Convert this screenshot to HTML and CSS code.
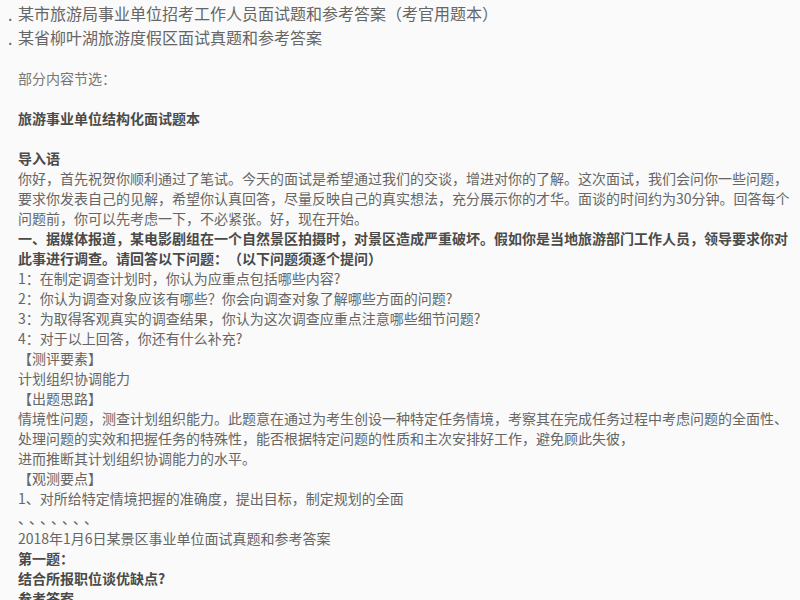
FILE: index.html
```html
<!DOCTYPE html>
<html lang="zh-CN">
<head>
    <meta charset="UTF-8">
    <meta name="viewport" content="width=device-width, initial-scale=1.0">
    <title>旅游事业单位结构化面试题本</title>
    <link rel="stylesheet" href="styles.css">
</head>
<body>
    <ul class="lista-enlaces">
        <li>某市旅游局事业单位招考工作人员面试题和参考答案（考官用题本）</li>
        <li>某省柳叶湖旅游度假区面试真题和参考答案</li>
    </ul>

    <div class="articulo">
        <p class="nota">部分内容节选：</p>

        <p class="titulo">旅游事业单位结构化面试题本</p>

        <p>
            <b>导入语</b><br>
            你好，首先祝贺你顺利通过了笔试。今天的面试是希望通过我们的交谈，增进对你的了解。这次面试，我们会问你一些问题，要求你发表自己的见解，希望你认真回答，尽量反映自己的真实想法，充分展示你的才华。面谈的时间约为30分钟。回答每个问题前，你可以先考虑一下，不必紧张。好，现在开始。<br>
            <b>一、据媒体报道，某电影剧组在一个自然景区拍摄时，对景区造成严重破坏。假如你是当地旅游部门工作人员，领导要求你对此事进行调查。请回答以下问题：（以下问题须逐个提问）</b><br>
            1：在制定调查计划时，你认为应重点包括哪些内容?<br>
            2：你认为调查对象应该有哪些？你会向调查对象了解哪些方面的问题?<br>
            3：为取得客观真实的调查结果，你认为这次调查应重点注意哪些细节问题?<br>
            4：对于以上回答，你还有什么补充?<br>
            【测评要素】<br>
            计划组织协调能力<br>
            【出题思路】<br>
            情境性问题，测查计划组织能力。此题意在通过为考生创设一种特定任务情境，考察其在完成任务过程中考虑问题的全面性、处理问题的实效和把握任务的特殊性，能否根据特定问题的性质和主次安排好工作，避免顾此失彼，<br>
            进而推断其计划组织协调能力的水平。<br>
            【观测要点】<br>
            1、对所给特定情境把握的准确度，提出目标，制定规划的全面<br>
            <span class="puntos">、、、、、、、</span><br>
            2018年1月6日某景区事业单位面试真题和参考答案<br>
            <b>第一题：</b><br>
            <b>结合所报职位谈优缺点?</b><br>
            <b>参考答案</b>
        </p>
    </div>
</body>
</html>
```

FILE: styles.css
```css
body {
    font-family: "Noto Sans CJK SC", "Liberation Sans", sans-serif;
    background-color: #f9faf9;
    color: #666;
    margin: 0;
    padding: 0;
    text-spacing-trim: space-all;
}

.lista-enlaces {
    list-style: none;
    margin: 1px 0 0 8px;
    padding: 0;
}

.lista-enlaces li {
    display: flex;
    font-size: 16px;
    line-height: 24px;
    color: #666;
}

.lista-enlaces li::before {
    content: ".";
    width: 10px;
    flex: none;
    position: relative;
    top: 1px;
}

.articulo {
    width: 776px;
    margin: 19px 0 0 18px;
    font-size: 14px;
    line-height: 20px;
}

.articulo p {
    margin: 0 0 20px;
}

.articulo b,
.titulo {
    font-weight: bold;
    color: #4a4a4a;
}

.nota {
    color: #777;
}

.puntos {
    letter-spacing: -3px;
    font-feature-settings: "halt" 0, "chws" 0;
}
```
